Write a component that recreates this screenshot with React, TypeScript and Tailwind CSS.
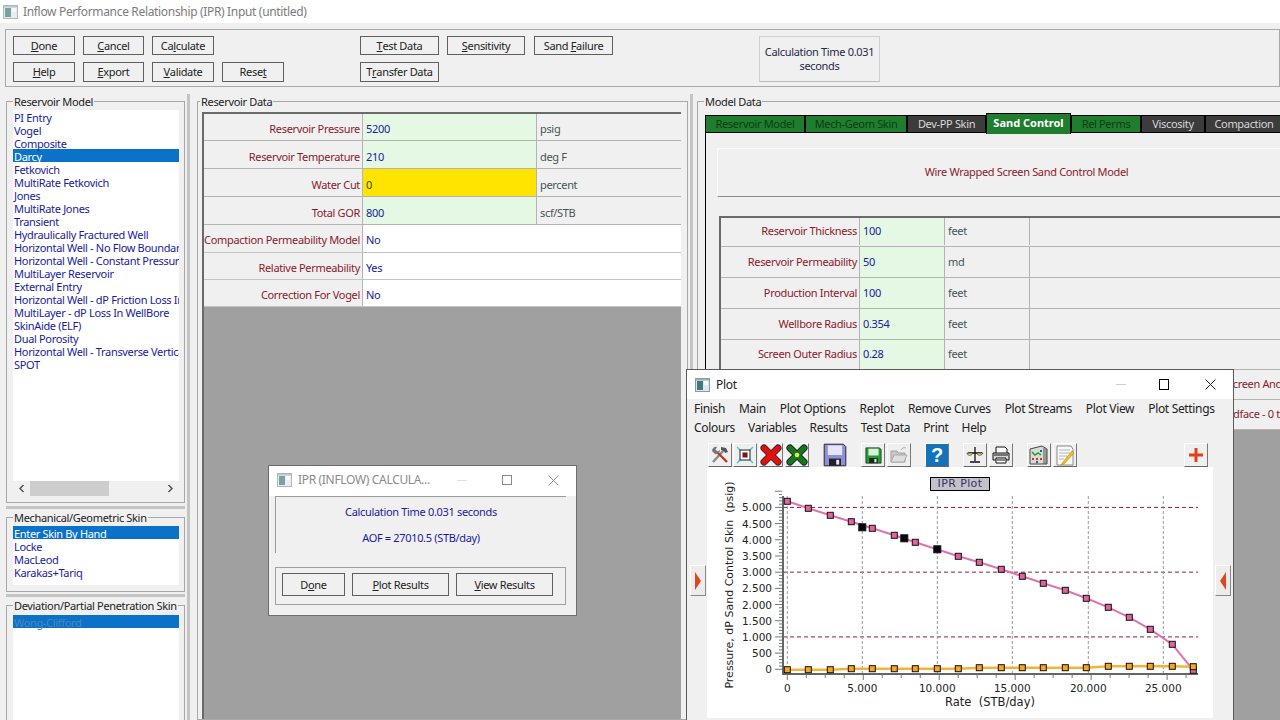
const blue = "text-[#1a1a9c]";
const red = "text-[#8b1a2b]";

const reservoirModels = [
  "PI Entry", "Vogel", "Composite", "Darcy", "Fetkovich", "MultiRate Fetkovich", "Jones", "MultiRate Jones",
  "Transient", "Hydraulically Fractured Well", "Horizontal Well - No Flow Boundaries",
  "Horizontal Well - Constant Pressure", "MultiLayer Reservoir", "External Entry",
  "Horizontal Well - dP Friction Loss In WellBore", "MultiLayer - dP Loss In WellBore", "SkinAide (ELF)",
  "Dual Porosity", "Horizontal Well - Transverse Vertical", "SPOT",
];

const Btn = ({ pre = "", u, post = "", w }: { pre?: string; u: string; post?: string; w: string }) => (
  <button className={`${w} h-full pt-[1px] border border-[#5f5f5f] bg-[#f0f0f0] text-[#222] flex items-center justify-center whitespace-pre`}>
    {pre}
    <u>{u}</u>
    {post}
  </button>
);

const ListRow = ({ text, selected, disabled }: { text: string; selected?: boolean; disabled?: boolean }) => (
  <div
    className={`h-[13px] leading-[13px] pl-[1px] whitespace-nowrap overflow-x-clip ${
      selected ? (disabled ? "bg-[#0a72c8] text-[#4d86b8]" : "bg-[#0a72c8] text-white") : blue
    }`}
  >
    <span className="relative top-[1px]">{text}</span>
  </div>
);

const Group = ({ title, className, legend = "", children }: { title: string; className: string; legend?: string; children?: React.ReactNode }) => (
  <fieldset className={`border border-[#a8a8a8] min-w-0 ${className}`}>
    <legend className={`px-[1px] h-[14px] leading-[14px] whitespace-nowrap text-[#222] ${legend}`}>
      <span className="relative top-[1px]">{title}</span>
    </legend>
    {children}
  </fieldset>
);

const AppIcon = ({ dim }: { dim?: boolean }) => (
  <svg width="15" height="14" viewBox="0 0 15 14" className={dim ? "opacity-70" : ""}>
    <rect x="0.5" y="0.5" width="14" height="13" fill="#dfe6ea" stroke="#8d9aa0" />
    <rect x="2" y="3" width="6" height="9" fill="#3d7a80" />
    <rect x="9" y="3" width="4" height="4" fill="#f4f6f7" />
    <rect x="1" y="1" width="13" height="1.5" fill="#9fb0b8" />
  </svg>
);

const reservoirRows = [
  { label: "Reservoir Pressure", value: "5200", unit: "psig", h: "h-[27px]" },
  { label: "Reservoir Temperature", value: "210", unit: "deg F", h: "h-[28px]" },
  { label: "Water Cut", value: "0", unit: "percent", h: "h-[28px]", warn: true },
  { label: "Total GOR", value: "800", unit: "scf/STB", h: "h-[28px]" },
];
const reservoirChoices = [
  { label: "Compaction Permeability Model", value: "No", h: "h-[28px]" },
  { label: "Relative Permeability", value: "Yes", h: "h-[27px]" },
  { label: "Correction For Vogel", value: "No", h: "h-[27px]" },
];

const modelRows = [
  { label: "Reservoir Thickness", value: "100", unit: "feet", h: "h-[29px] pb-[1px]" },
  { label: "Reservoir Permeability", value: "50", unit: "md", h: "h-[31px]" },
  { label: "Production Interval", value: "100", unit: "feet", h: "h-[31px]" },
  { label: "Wellbore Radius", value: "0.354", unit: "feet", h: "h-[31px]" },
  { label: "Screen Outer Radius", value: "0.28", unit: "feet", h: "h-[30px]" },
  { label: "", value: "", unit: "", h: "h-[30px]", note: "Screen And", pad: "pl-[197px]" },
  { label: "", value: "", unit: "", h: "h-[30px]", note: "Sandface - 0 to", pad: "pl-[185px]" },
];

const tabs = [
  { text: "Reservoir Model", w: "w-[100px]", on: true },
  { text: "Mech-Geom Skin", w: "w-[102px]", on: true },
  { text: "Dev-PP Skin", w: "w-[79px]", on: false },
];
const tabsAfter = [
  { text: "Rel Perms", w: "w-[70px]", on: true },
  { text: "Viscosity", w: "w-[64px]", on: false },
  { text: "Compaction", w: "w-[78px]", on: false },
];

const Tab = ({ text, w, on }: { text: string; w: string; on: boolean }) => (
  <div
    className={`${w} h-[17px] shrink-0 border border-b-0 border-black flex items-center justify-center ${
      on ? "bg-[#1f7d2e] text-[#0d3d12]" : "bg-[#3c3c3c] text-[#d8d8d8]"
    }`}
  >
    {text}
  </div>
);

const ToolBtn = ({ className = "", children }: { className?: string; children?: React.ReactNode }) => (
  <div className={`w-[24px] h-[24px] shrink-0 border border-t-white border-l-white border-r-[#777] border-b-[#666] bg-[#efefef] flex items-center justify-center ${className}`}>
    {children}
  </div>
);

const Floppy = ({ body, label, size }: { body: string; label: string; size: number }) => (
  <svg width={size} height={size} viewBox="0 0 20 20">
    <path d="M1 1h16l2 2v16H1z" fill={body} stroke="#222" strokeWidth="0.8" />
    <rect x="4" y="2" width="12" height="8" fill={label} />
    <rect x="5" y="13" width="10" height="6" fill="#222" />
    <rect x="11" y="14" width="2.5" height="4" fill={label} />
  </svg>
);

const toolIcons = [
  <svg key="tools" width="20" height="20" viewBox="0 0 20 20">
    <path d="M3 17 14 5" stroke="#8a8a8a" strokeWidth="2.4" />
    <path d="M11 2l5 1 2 4-3 1-1-2-3-1z" fill="#555" />
    <path d="M17 17 7 7" stroke="#b33a2a" strokeWidth="2.4" />
    <path d="M2 6a4 4 0 0 1 5-4l-1.500 2.500 2 2L10 5a4 4 0 0 1-5 4z" fill="#777" />
  </svg>,
  <svg key="fit" width="20" height="20" viewBox="0 0 20 20">
    <path d="M2 2l4 4M18 2l-4 4M2 18l4-4M18 18l-4-4" stroke="#34d0e0" strokeWidth="1.4" />
    <rect x="5" y="5" width="10" height="10" fill="#fff" stroke="#222" />
    <rect x="7.500" y="7.500" width="5" height="5" fill="#7a1020" />
  </svg>,
  <svg key="red" width="22" height="22" viewBox="0 0 22 22">
    <path d="M4 4l14 14M18 4 4 18" stroke="#222" strokeWidth="7" strokeLinecap="round" />
    <path d="M4 4l14 14M18 4 4 18" stroke="#e01010" strokeWidth="5.400" strokeLinecap="round" />
  </svg>,
  <svg key="green" width="22" height="22" viewBox="0 0 22 22">
    <path d="M4 4l14 14M18 4 4 18" stroke="#111" strokeWidth="7" strokeLinecap="round" />
    <path d="M4 4l14 14M18 4 4 18" stroke="#15761f" strokeWidth="5.400" strokeLinecap="round" />
    <circle cx="11" cy="11" r="2.300" fill="#f0e83a" />
  </svg>,
];
const toolGaps = ["", "ml-[1px]", "ml-[2px]", "ml-[2px]"];

const Plot = () => {
  const xs = [787.3, 808.3, 830.3, 851.3, 872.3, 894.3, 915.3, 937.3, 958.3, 979.3, 1001.3, 1022.3, 1043.3, 1065.3, 1086.3, 1108.3, 1129.3, 1150.3, 1172.3, 1193.3];
  const pink: [number, number][] = [
    [787.3, 501.3], [808.3, 508.3], [830.3, 515.3], [851.3, 521.7], [872.3, 528.3], [894.3, 535.3], [915.3, 542.3],
    [958.3, 556.3], [979.3, 562.3], [1001.3, 569.3], [1022.3, 576.3], [1043.3, 583.3], [1065.3, 590.3], [1086.3, 598.3],
    [1108.3, 607.3], [1129.3, 617.3], [1150.3, 629.3], [1172.3, 644.3], [1193.3, 670.3],
  ];
  const orangeY = [669.7, 669.7, 669.7, 668.7, 668.7, 668.7, 668.7, 668.7, 668.7, 667.7, 667.7, 667.7, 667.7, 667.7, 667.7, 666.3, 666.3, 666.3, 666.3, 666.7];
  const orange = xs.map((x, i) => [x, orangeY[i]] as [number, number]);
  const black: [number, number][] = [[862.3, 527.3], [904.3, 538.3], [937.3, 549.3]];
  const toPoints = (p: [number, number][]) => p.map(([x, y]) => `${x},${y}`).join(" ");
  const yLabels = ["5.000", "4.500", "4.000", "3.500", "3.000", "2.500", "2.000", "1.500", "1.000", "500", "0"];
  const chartFont = { fontFamily: "'DejaVu Sans', sans-serif" };

  return (
    <svg width="506" height="251" viewBox="707 467 506 251" className="block tracking-normal">
      {[5000, 3000, 1000].map((v) => (
        <line key={v} x1="783" x2="1198" y1={669.3 - v * 0.03238} y2={669.3 - v * 0.03238} stroke="#8a1f3f" strokeDasharray="4 3" />
      ))}
      {[862.3, 937.3, 1012.3, 1088.3, 1163.3].map((x) => (
        <line key={x} x1={x} x2={x} y1="496" y2="674" stroke="#9a9a9a" strokeDasharray="3 2" />
      ))}
      <line x1="787.3" x2="787.3" y1="496" y2="674" stroke="#9a9a9a" strokeDasharray="3 2" />
      {Array.from({ length: 56 }, (_, i) => (
        <line key={i} x1={i % 5 === 0 ? 775 : 779} x2="782" y1={669.3 - i * 3.238} y2={669.3 - i * 3.238} stroke="#777" />
      ))}
      {Array.from({ length: 22 }, (_, i) => (
        <line key={i} x1={787.3 + i * 18.99} x2={787.3 + i * 18.99} y1="675" y2={i % 4 === 0 ? 680 : 678} stroke="#777" />
      ))}
      <path d="M783 496V674H1198" fill="none" stroke="#666" strokeWidth="2" />
      <polyline points={toPoints(pink)} fill="none" stroke="#de74ac" strokeWidth="2" />
      <polyline points={toPoints(orange)} fill="none" stroke="#f3b33a" strokeWidth="2.400" />
      {pink.map(([x, y]) => (
        <rect key={x} x={x - 3} y={y - 3} width="6" height="6" fill="#e0659f" stroke="#111" />
      ))}
      {orange.map(([x, y]) => (
        <rect key={x} x={x - 3} y={y - 3} width="6" height="6" fill="#f5a623" stroke="#111" />
      ))}
      {black.map(([x, y]) => (
        <rect key={x} x={x - 3.500} y={y - 3.500} width="7" height="7" fill="#050510" stroke="#111" />
      ))}
      <g fontSize="10.500" fill="#222" style={chartFont}>
        {yLabels.map((t, i) => (
          <text key={t} x="772" y={507.3 + i * 16.2 + 4} textAnchor="end">{t}</text>
        ))}
        {[["0", 787.3], ["5.000", 862.3], ["10.000", 937.3], ["15.000", 1012.3], ["20.000", 1088.3], ["25.000", 1163.3]].map(([t, x]) => (
          <text key={t} x={x} y="692" textAnchor="middle">{t}</text>
        ))}
        <text x="990" y="706" textAnchor="middle" fontSize="11.500" xmlSpace="preserve">Rate  (STB/day)</text>
        <text transform="translate(733 585) rotate(-90)" textAnchor="middle" fontSize="11" xmlSpace="preserve">Pressure, dP Sand Control Skin  (psig)</text>
      </g>
    </svg>
  );
};

const Arrow = ({ left }: { left?: boolean }) => (
  <div className="w-[16px] h-[31px] mt-[98px] shrink-0 border border-t-white border-l-white border-r-[#888] border-b-[#888] bg-[#ececec] flex items-center justify-center">
    <svg width="8" height="18" viewBox="0 0 8 18">
      <path d={left ? "M7 0v18L1 9z" : "M1 0v18L7 9z"} fill="#e2461c" />
    </svg>
  </div>
);

export default function App() {
  return (
    <div className="relative w-[1280px] h-[720px] overflow-hidden bg-[#f0f0f0] flex flex-col text-[11px] tracking-[-0.33px] font-['Noto_Sans',sans-serif]">
      {/* main window title */}
      <div className="h-[23px] shrink-0 bg-white flex items-center pl-[3px] gap-[5px] text-[12px] text-[#7c7c7c]">
        <AppIcon dim />
        Inflow Performance Relationship (IPR) Input (untitled)
      </div>

      {/* top buttons */}
      <div className="h-[58px] mt-[6px] ml-[5px] shrink-0 border border-[#a8a8a8] flex pl-[7px] pt-[6px]">
        <div className="w-[347px] flex flex-col gap-[7px]">
          <div className="h-[19px] flex gap-[8px]">
            <Btn u="D" post="one" w="w-[62px]" />
            <Btn u="C" post="ancel" w="w-[61px]" />
            <Btn pre="Ca" u="l" post="culate" w="w-[62px]" />
          </div>
          <div className="h-[20px] flex gap-[8px]">
            <Btn u="H" post="elp" w="w-[62px]" />
            <Btn u="E" post="xport" w="w-[61px]" />
            <Btn u="V" post="alidate" w="w-[62px]" />
            <Btn pre="Rese" u="t" w="w-[62px]" />
          </div>
        </div>
        <div className="w-[399px] flex flex-col gap-[7px]">
          <div className="h-[19px] flex gap-[8px]">
            <Btn u="T" post="est Data" w="w-[79px]" />
            <Btn u="S" post="ensitivity" w="w-[78px]" />
            <div className="w-[1px]" />
            <Btn pre="Sand " u="F" post="ailure" w="w-[79px] -ml-[8px]" />
          </div>
          <div className="h-[20px] flex">
            <Btn pre="T" u="r" post="ansfer Data" w="w-[79px]" />
          </div>
        </div>
        <div className="w-[121px] h-[46px] border border-[#d0d0d0] border-b-[#b8b8b8] flex items-center justify-center text-center text-[#1c2a4a] leading-[14px] px-[4px]">
          Calculation Time 0.031
          <br />
          seconds
        </div>
      </div>

      {/* panels */}
      <div className="flex-1 min-h-0 mt-[7px] flex overflow-hidden">
        <div className="w-[179px] ml-[6px] shrink-0 flex flex-col">
          <Group title="Reservoir Model" className="h-[409px] shrink-0 pl-[6px] pr-[5px]">
            <div className="mt-[2px] h-[371px] bg-white">
              {reservoirModels.map((m) => (
                <ListRow key={m} text={m} selected={m === "Darcy"} />
              ))}
            </div>
            <div className="h-[15px] relative flex items-center justify-between px-[5px] text-[#555]">
              <svg width="7" height="9" viewBox="0 0 7 9"><path d="M5.500 1 2 4.500 5.500 8" fill="none" stroke="#555" strokeWidth="1.500" /></svg>
              <div className="absolute left-[17px] w-[79px] h-[15px] bg-[#cdcdcd]" />
              <svg width="7" height="9" viewBox="0 0 7 9"><path d="M1.500 1 5 4.500 1.500 8" fill="none" stroke="#555" strokeWidth="1.500" /></svg>
            </div>
          </Group>
          <div className="h-[3px] mt-[3px] mb-[1px] shrink-0 bg-[#c4c4c4]" />
          <Group title="Mechanical/Geometric Skin" className="h-[82px] shrink-0 pl-[6px] pr-[5px]">
            <div className="mt-[2px] h-[59px] bg-white">
              {["Enter Skin By Hand", "Locke", "MacLeod", "Karakas+Tariq"].map((m, i) => (
                <ListRow key={m} text={m} selected={i === 0} />
              ))}
            </div>
          </Group>
          <div className="h-[3px] mt-[2px] mb-[1px] shrink-0 bg-[#c4c4c4]" />
          <Group title="Deviation/Partial Penetration Skin" className="flex-1 pl-[6px] pr-[5px]">
            <div className="mt-[3px] h-[110px] bg-white">
              <ListRow text="Wong-Clifford" selected disabled />
            </div>
          </Group>
        </div>

        <div className="w-[3px] ml-[2px] shrink-0 bg-[#c4c4c4]" />

        <Group title="Reservoir Data" legend="-ml-[2px]" className="w-[491px] ml-[7px] shrink-0 pl-[4px] pr-[6px]">
          <div className="mt-[4px] h-[607px] bg-[#a0a0a0] border-t-2 border-l-2 border-[#6a6a6a] flex flex-col">
            {reservoirRows.map((r) => (
              <div key={r.label} className={`${r.h} shrink-0 grid grid-cols-[159px_174px_1fr] border-b border-[#b4b4b4] bg-[#f0f0f0]`}>
                <div className={`${red} flex items-center justify-end pt-[5px] pr-[2px] border-r border-[#b4b4b4]`}>{r.label}</div>
                <div className={`flex items-center pt-[5px] pl-[3px] border-r border-[#b4b4b4] ${r.warn ? "bg-[#ffe400] text-[#444400]" : `bg-[#e4f8e4] ${blue}`}`}>{r.value}</div>
                <div className="flex items-center pt-[5px] pl-[3px] text-[#445555]">{r.unit}</div>
              </div>
            ))}
            {reservoirChoices.map((r) => (
              <div key={r.label} className={`${r.h} shrink-0 grid grid-cols-[159px_1fr] border-b border-[#c4c4c4] bg-white`}>
                <div className={`${red} flex items-center justify-end pt-[4px] pr-[2px] bg-[#f0f0f0] border-r border-[#b4b4b4] whitespace-nowrap`}>{r.label}</div>
                <div className={`flex items-center pt-[4px] pl-[3px] ${blue}`}>{r.value}</div>
              </div>
            ))}
          </div>
        </Group>

        <div className="w-[3px] ml-[2px] shrink-0 bg-[#c4c4c4]" />

        <Group title="Model Data" legend="-ml-[1px]" className="w-[640px] ml-[4px] shrink-0 pl-[7px]">
          <div className="mt-[3px] h-[21px] flex items-end">
            {tabs.map((t) => (
              <Tab key={t.text} {...t} />
            ))}
            <div className="relative z-10 w-[85px] h-[21px] -mb-[2px] shrink-0 border border-b-0 border-black bg-[#1f7d2e] text-white font-bold tracking-normal flex items-start justify-center leading-[17px]">
              Sand Control
            </div>
            {tabsAfter.map((t) => (
              <Tab key={t.text} {...t} />
            ))}
          </div>
          <div className="h-[600px] border-t border-l border-black pl-[11px] pt-[15px] flex flex-col">
            <div className={`w-[618px] h-[49px] shrink-0 border-t border-t-[#fafafa] border-l border-l-[#fafafa] border-b border-b-[#8a8a8a] flex items-center justify-center ${red}`}>
              Wire Wrapped Screen Sand Control Model
            </div>
            <div className="mt-[19px] ml-[2px] bg-[#a0a0a0] flex-1 flex flex-col border-t-2 border-l-2 border-[#6a6a6a]">
              {modelRows.map((r, i) => (
                <div key={i} className={`${r.h} shrink-0 grid grid-cols-[139px_85px_85px_1fr] border-b border-[#b4b4b4] bg-[#f0f0f0]`}>
                  <div className={`${red} flex items-center justify-end pr-[2px] border-r border-[#b4b4b4]`}>{r.label}</div>
                  <div className={`${blue} bg-[#e4f8e4] flex items-center pl-[3px] border-r border-[#b4b4b4]`}>{r.value}</div>
                  <div className="flex items-center pl-[3px] text-[#445555] border-r border-[#b4b4b4]">{r.unit}</div>
                  <div className={`${red} ${r.pad ?? ""} flex items-center whitespace-nowrap overflow-hidden`}>{r.note}</div>
                </div>
              ))}
            </div>
          </div>
        </Group>
      </div>

      {/* calculation dialog */}
      <div className="absolute left-[268px] top-[465px] w-[309px] h-[151px] bg-[#f0f0f0] border border-[#6e6e6e] flex flex-col">
        <div className="h-[30px] shrink-0 bg-white flex items-center pl-[8px] pb-[2px] text-[12px] text-[#8a8a8a]">
          <AppIcon dim />
          <span className="ml-[6px] w-[155px] whitespace-nowrap">IPR (INFLOW) CALCULA...</span>
          <div className="w-[10px] h-px bg-[#e0e0e0] ml-[4px]" />
          <div className="w-[10px] h-[10px] border border-[#8a8a8a] ml-[35px]" />
          <svg width="11" height="11" viewBox="0 0 11 11" className="ml-[36px]"><path d="M.5.5l10 10M10.500.5l-10 10" stroke="#8a8a8a" /></svg>
        </div>
        <div className={`h-[57px] ml-[6px] mr-[10px] shrink-0 border-t border-l border-[#9a9a9a] border-r-[#fafafa] border-b-[#fafafa] flex flex-col items-center gap-[10px] pt-[7px] leading-[16px] ${blue}`}>
          <div>Calculation Time 0.031 seconds</div>
          <div>AOF = 27010.5 (STB/day)</div>
        </div>
        <div className="h-[38px] ml-[6px] mr-[10px] mt-[14px] shrink-0 border border-[#a0a0a0] flex items-start gap-[7px] pl-[6px] pt-[5px]">
          <div className="h-[23px] flex gap-[7px]">
            <Btn pre="D" u="o" post="ne" w="w-[63px]" />
            <Btn u="P" post="lot Results" w="w-[97px]" />
            <Btn u="V" post="iew Results" w="w-[97px]" />
          </div>
        </div>
      </div>

      {/* plot window */}
      <div className="absolute left-[686px] top-[369px] w-[548px] h-[351px] bg-[#f0f0f0] border border-[#5a5a5a] border-b-0 flex flex-col text-[12px] text-[#222]">
        <div className="h-[29px] shrink-0 bg-white flex items-center pl-[8px]">
          <AppIcon />
          <span className="ml-[6px] flex-1">Plot</span>
          <div className="w-[10px] h-px bg-[#cfcfcf] mr-[33px]" />
          <div className="w-[10px] h-[11px] border border-black mr-[36px]" />
          <svg width="11" height="11" viewBox="0 0 11 11" className="mr-[17px]"><path d="M.5.5l10 10M10.500.5l-10 10" stroke="#222" /></svg>
        </div>
        <div className="h-[19px] shrink-0 flex items-center gap-[14px] pl-[7px] whitespace-nowrap">
          {["Finish", "Main", "Plot Options", "Replot", "Remove Curves", "Plot Streams", "Plot View", "Plot Settings"].map((m) => (
            <span key={m}>{m}</span>
          ))}
        </div>
        <div className="h-[19px] shrink-0 flex items-center gap-[13px] pl-[7px] whitespace-nowrap">
          {["Colours", "Variables", "Results", "Test Data", "Print", "Help"].map((m) => (
            <span key={m}>{m}</span>
          ))}
        </div>
        <div className="h-[24px] mt-[6px] shrink-0 flex pl-[21px]">
          {toolIcons.map((icon, i) => (
            <ToolBtn key={i} className={toolGaps[i]}>{icon}</ToolBtn>
          ))}
          <div className="ml-[14px]"><Floppy body="#8f8fd8" label="#e4e4fa" size={24} /></div>
          <ToolBtn className="ml-[14px]"><Floppy body="#1f9d35" label="#d8f0d8" size={17} /></ToolBtn>
          <ToolBtn className="ml-[2px]">
            <svg width="20" height="20" viewBox="0 0 20 20">
              <path d="M2 6h6l1 2h7v9H2z" fill="#c8c8c8" stroke="#a0a0a0" />
              <path d="M2 17l3-7h13l-3 7z" fill="#dedede" stroke="#aaa" />
              <path d="M12 5c1-2 3-3 5-2" fill="none" stroke="#aaa" />
            </svg>
          </ToolBtn>
          <ToolBtn className="ml-[14px] !bg-[#1273b8]">
            <span className="text-white font-bold text-[20px] leading-[20px] font-['Liberation_Sans',sans-serif]">?</span>
          </ToolBtn>
          <ToolBtn className="ml-[14px]">
            <svg width="20" height="20" viewBox="0 0 20 20">
              <path d="M10 2v14M5 17h10M3 8h14" stroke="#111" strokeWidth="1.300" />
              <path d="M2 8c0 3 5 3 6 0zM12 8c0 3 5 3 6 0z" fill="#e8d84a" stroke="#333" strokeWidth="0.700" />
            </svg>
          </ToolBtn>
          <ToolBtn className="ml-[2px]">
            <svg width="20" height="20" viewBox="0 0 20 20">
              <path d="M5 8V2h9l2 2v4" fill="#fff" stroke="#111" />
              <path d="M2 8h16v7H2z" fill="#d8d8d8" stroke="#111" />
              <path d="M5 13h10v5H5z" fill="#fff" stroke="#111" />
              <path d="M3 10h14M6 15h8" stroke="#111" />
            </svg>
          </ToolBtn>
          <ToolBtn className="ml-[14px]">
            <svg width="22" height="22" viewBox="0 0 22 22">
              <path d="M2 5l12-3 5 3v15H2z" fill="#d7dbd2" stroke="#444" />
              <path d="M4 8l3 3 3-2 3 2" fill="none" stroke="#1f9d35" strokeWidth="1.500" />
              <path d="M4 14h2v2H4zM8 14h2v2H8zM12 14h2v2h-2z" fill="#d03030" />
              <path d="M12 6h2v2h-2zM8 17h2v2H8z" fill="#2a5ac8" />
              <path d="M16 4v16M18 5v15" stroke="#555" />
            </svg>
          </ToolBtn>
          <ToolBtn className="ml-[2px]">
            <svg width="22" height="22" viewBox="0 0 22 22">
              <path d="M3 2h14l2 3v16H3z" fill="#fbfbf4" stroke="#888" />
              <path d="M5 6h11M5 9h11M5 12h8M5 15h5" stroke="#a8b8c8" />
              <path d="M18 7 9 18l-2 3 3-1 10-11z" fill="#f2bf2a" stroke="#b88a10" strokeWidth="0.600" />
            </svg>
          </ToolBtn>
          <ToolBtn className="ml-[107px]">
            <svg width="16" height="16" viewBox="0 0 16 16"><path d="M8 1v14M1 8h14" stroke="#e2401c" strokeWidth="3" /></svg>
          </ToolBtn>
        </div>
        <div className="relative flex-1 flex items-start pl-[3px]">
          <Arrow />
          <div className="ml-[1px] w-[506px] h-[251px] bg-white shrink-0">
            <Plot />
          </div>
          <div className="ml-[2px]"><Arrow left /></div>
          <div className="absolute left-[243px] top-[10px] w-[60px] h-[14px] bg-[#c2c2c8] border border-black flex items-center justify-center text-[11px] tracking-[0.4px] text-[#33336a] font-['DejaVu_Sans',sans-serif]">
            IPR Plot
          </div>
        </div>
      </div>
    </div>
  );
}
